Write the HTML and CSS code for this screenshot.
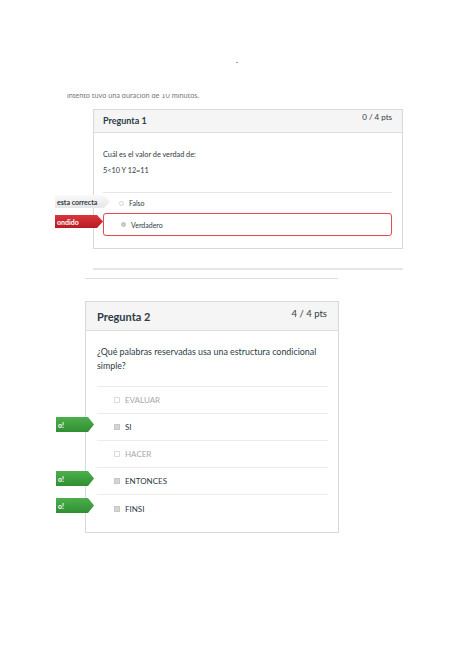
FILE: index.html
```html
<!DOCTYPE html>
<html lang="es">
<head>
<meta charset="utf-8">
<link rel="stylesheet" href="styles.css">
</head>
<body>
<div class="page">
  <div class="dot-row"><span class="dot"></span></div>
  <div class="intro"><span>intento tuvo una duración de 10 minutos.</span></div>

  <div class="card card1">
    <div class="card-head">
      <span class="q-title">Pregunta 1</span>
      <span class="q-pts">0 / 4 pts</span>
    </div>
    <div class="card-body">
      <p class="q-text">Cuál es el valor de verdad de:</p>
      <p class="q-text q-text2">5&lt;10 Y 12=11</p>
      <div class="answers">
        <div class="ans">
          <span class="tag tag-correct"><span class="tag-label">esta correcta</span></span>
          <span class="radio"></span><span class="ans-label">Falso</span>
        </div>
        <div class="ans ans-wrong">
          <span class="tag tag-wrong"><span class="tag-label">ondido</span></span>
          <span class="radio radio-on"></span><span class="ans-label">Verdadero</span>
        </div>
      </div>
    </div>
  </div>

  <div class="next-edge"></div>
  <div class="divider"></div>

  <div class="card card2">
    <div class="card-head">
      <span class="q-title">Pregunta 2</span>
      <span class="q-pts">4 / 4 pts</span>
    </div>
    <div class="card-body">
      <p class="q-text">¿Qué palabras reservadas usa una estructura condicional simple?</p>
      <div class="answers">
        <div class="opt opt-off"><span class="check"></span><span>EVALUAR</span></div>
        <div class="opt"><span class="tag tag-ok"><span class="tag-label">o!</span></span><span class="check check-on"></span><span>SI</span></div>
        <div class="opt opt-off"><span class="check"></span><span>HACER</span></div>
        <div class="opt"><span class="tag tag-ok"><span class="tag-label">o!</span></span><span class="check check-on"></span><span>ENTONCES</span></div>
        <div class="opt"><span class="tag tag-ok"><span class="tag-label">o!</span></span><span class="check check-on"></span><span>FINSI</span></div>
      </div>
    </div>
  </div>
</div>
</body>
</html>
```

FILE: styles.css
```css
html, body {
  margin: 0;
  padding: 0;
  background: #ffffff;
}
body {
  font-family: Lato, "Open Sans", "Liberation Sans", sans-serif;
  color: #2d3b45;
}
.page {
  width: 474px;
  height: 670px;
  position: relative;
  overflow: hidden;
}
.dot-row {
  height: 63px;
  display: flex;
  justify-content: flex-start;
  align-items: flex-end;
  padding-left: 236px;
}
.dot {
  width: 2px;
  height: 1px;
  background: #9a9a9a;
  display: block;
}
.intro {
  margin-top: 31px;
  height: 6px;
  overflow: hidden;
  display: flex;
  align-items: flex-end;
  padding-left: 67px;
}
.intro span {
  font-size: 7.3px;
  line-height: 8px;
  color: #777;
  white-space: nowrap;
}

.card {
  border: 1px solid #d9d9d9;
  background: #fff;
  box-sizing: border-box;
}
.card1 {
  margin-top: 9px;
  margin-left: 93px;
  width: 310px;
}
.card-head {
  background: #f5f5f5;
  border-bottom: 1px solid #dcdcdc;
  display: flex;
  justify-content: space-between;
}
.card1 .card-head {
  height: 22px;
  padding: 0 10px 0 9px;
}
.q-title {
  font-weight: 700;
  color: #2d3b45;
}
.card1 .q-title {
  font-size: 9px;
  line-height: 22px;
}
.card1 .q-pts {
  font-size: 8px;
  line-height: 15px;
  color: #2d3b45;
}
.card1 .card-body {
  padding: 17px 10px 12px 9px;
}
.q-text {
  margin: 0;
}
.card1 .q-text {
  font-size: 7.3px;
  line-height: 9px;
  color: #2d3b45;
}
.card1 .q-text2 {
  margin-top: 7px;
}
.card1 .answers {
  margin-top: 17px;
  border-top: 1px solid #e6e6e6;
}
.ans {
  position: relative;
  height: 20px;
  display: flex;
  align-items: center;
  padding-left: 16px;
  font-size: 7px;
  color: #2d3b45;
  box-sizing: border-box;
}
.ans-wrong {
  height: 23px;
  border: 1px solid #e04e55;
  border-radius: 3px;
  padding-left: 17px;
  box-shadow: 0 0 1px #f3a4a8;
}
.radio {
  width: 5px;
  height: 5px;
  border: 1px solid #d5d5d5;
  border-radius: 50%;
  margin-right: 5px;
  box-sizing: border-box;
}
.radio-on {
  background: #cfcfcf;
  border-color: #bbb;
}

.tag {
  position: absolute;
  display: flex;
  justify-content: flex-start;
  align-items: center;
  white-space: nowrap;
  font-weight: 700;
  font-size: 7px;
  clip-path: polygon(0 0, calc(100% - 6px) 0, 100% 50%, calc(100% - 6px) 100%, 0 100%);
}
.tag-label {
  padding-left: 2px;
}
.tag-correct {
  left: -48px;
  top: 2px;
  width: 55px;
  height: 13px;
  color: #2d3b45;
  background: linear-gradient(#fafafa, #e6e6e6);
}
.tag-wrong {
  left: -49px;
  top: 1px;
  width: 48px;
  height: 13px;
  color: #fff;
  background: linear-gradient(#d9363b, #b81c22);
}

.next-edge {
  margin-top: 19px;
  margin-left: 93px;
  width: 310px;
  height: 2px;
  background: #e6e6e6;
}
.divider {
  margin-top: 8px;
  margin-left: 85px;
  width: 253px;
  height: 1px;
  background: #dedede;
}

.card2 {
  margin-top: 22px;
  margin-left: 85px;
  width: 254px;
}
.card2 .card-head {
  height: 28px;
  padding: 0 11px 0 11px;
}
.card2 .q-title {
  font-size: 11px;
  line-height: 30px;
}
.card2 .q-pts {
  font-size: 9.5px;
  line-height: 23px;
  color: #2d3b45;
}
.card2 .card-body {
  padding: 14px 10px 10px 11px;
}
.card2 .q-text {
  font-size: 8.9px;
  line-height: 14px;
  color: #2d3b45;
}
.card2 .answers {
  margin-top: 13px;
  border-top: 1px solid #ececec;
}
.opt {
  position: relative;
  height: 27px;
  display: flex;
  align-items: center;
  padding-left: 17px;
  font-size: 8px;
  color: #2d3b45;
  border-bottom: 1px solid #ececec;
  box-sizing: border-box;
}
.opt:last-child {
  border-bottom: none;
}
.opt-off {
  color: #a8a8a8;
}
.check {
  width: 6px;
  height: 6px;
  border: 1px solid #dcdcdc;
  margin-right: 5px;
  box-sizing: border-box;
}
.check-on {
  background: #d4d4d4;
  border-color: #c8c8c8;
}
.tag-ok {
  left: -41px;
  top: 3px;
  width: 38px;
  height: 15px;
  color: #fff;
  background: linear-gradient(#4caf4c, #2f8f32);
  font-size: 7px;
}
```
